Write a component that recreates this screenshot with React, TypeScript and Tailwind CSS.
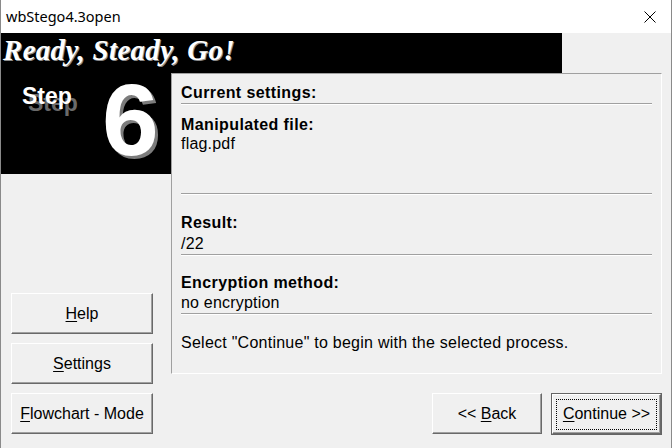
import React from "react";

const sans = "font-['Liberation_Sans',Arial,sans-serif]";

function Etched({ className = "" }: { className?: string }) {
  return <div className={`h-[2px] border-t border-b border-t-[#a0a0a0] border-b-white ${className}`} />;
}

function WinButton({
  children,
  isDefault = false,
  className = "",
}: {
  children: React.ReactNode;
  isDefault?: boolean;
  className?: string;
}) {
  if (isDefault) {
    return (
      <button className={`h-[42px] border border-[#646464] bg-[#f0f0f0] p-0 ${className}`}>
        <div className="flex h-full w-full items-center justify-center border-t border-l border-b border-r border-t-white border-l-white border-b-[#696969] border-r-[#696969] shadow-[inset_-1px_-1px_0_#a0a0a0]">
          <div className="flex h-[31px] w-[101px] items-center justify-center border border-dotted border-black">
            {children}
          </div>
        </div>
      </button>
    );
  }
  return (
    <button
      className={`flex h-[41px] items-center justify-center border-t border-l border-b border-r border-t-white border-l-white border-b-[#696969] border-r-[#696969] bg-[#f0f0f0] shadow-[inset_-1px_-1px_0_#a0a0a0] ${className}`}
    >
      {children}
    </button>
  );
}

function Label({ children }: { children: React.ReactNode }) {
  return <div className="text-[16px] font-bold leading-[18px] tracking-[0.4px] text-black">{children}</div>;
}

function Value({ children, className = "" }: { children: React.ReactNode; className?: string }) {
  return <div className={`text-[16px] leading-[18px] tracking-[0.2px] text-black ${className}`}>{children}</div>;
}

export default function App() {
  return (
    <div className={`flex h-[448px] w-[672px] flex-col overflow-hidden border-x border-[#8a8a8a] bg-[#f0f0f0] ${sans} text-black`}>
      {/* title bar */}
      <div className="flex h-[33px] shrink-0 items-center justify-between bg-white pl-[5px] pr-[15px]">
        <span className="font-['Noto_Sans',sans-serif] text-[14.5px] leading-none text-black">wbStego4.3open</span>
        <svg width="12" height="12" viewBox="0 0 12 12" className="mt-[1px]">
          <path d="M0.5 0.5 L11.5 11.5 M11.5 0.5 L0.5 11.5" stroke="#000" strokeWidth="1" fill="none" />
        </svg>
      </div>

      {/* banner */}
      <div className="h-[40px] w-[561px] shrink-0 bg-black pl-[2px] pt-[3px]">
        <span className="font-['Liberation_Serif','Times_New_Roman',serif] text-[29px] font-bold italic leading-none tracking-[0.3px] text-white [text-shadow:1px_1px_0_#8a8a8a]">
          Ready, Steady, Go!
        </span>
      </div>

      <div className="flex flex-1">
        {/* left column */}
        <div className="flex w-[170px] shrink-0 flex-col">
          <div className="relative h-[101px] bg-black">
            <span className="absolute left-[21px] top-[12px] text-[23px] font-bold leading-none text-white [text-shadow:6px_7px_0_#6a6a6a]">
              Step
            </span>
            <span className="absolute left-[101px] top-[-4px] text-[102px] font-bold leading-none text-white [text-shadow:3px_3px_0_#7c7c7c]">
              6
            </span>
          </div>
          <div className="mt-[119px] flex flex-col gap-[9px] pl-[10px]">
            <WinButton className="w-[142px]">
              <span className="text-[16px]"><span className="underline underline-offset-2">H</span>elp</span>
            </WinButton>
            <WinButton className="w-[142px]">
              <span className="text-[16px]"><span className="underline underline-offset-2">S</span>ettings</span>
            </WinButton>
            <WinButton className="w-[142px]">
              <span className="text-[16px]"><span className="underline underline-offset-2">F</span>lowchart - Mode</span>
            </WinButton>
          </div>
        </div>

        {/* right column */}
        <div className="flex flex-1 flex-col">
          <div className="flex h-[301px] w-[491px] flex-col border-t border-l border-r border-b border-t-[#a0a0a0] border-l-[#a0a0a0] border-r-white border-b-white px-[9px] pt-[10px]">
            <Label>Current settings:</Label>
            <Etched className="mt-[1px]" />
            <div className="mt-[11px]">
              <Label>Manipulated file:</Label>
            </div>
            <Value className="mt-[1px]">flag.pdf</Value>
            <Etched className="mt-[40px]" />
            <div className="mt-[19px]">
              <Label>Result:</Label>
            </div>
            <Value className="mt-[3px]">/22</Value>
            <Etched className="mt-[1px]" />
            <div className="mt-[18px]">
              <Label>Encryption method:</Label>
            </div>
            <Value className="mt-[2px]">no encryption</Value>
            <Etched className="mt-[1px]" />
            <Value className="mt-[19px] text-[16.5px] tracking-[0.25px]">Select "Continue" to begin with the selected process.</Value>
          </div>

          <div className="mt-[19px] flex justify-end gap-[9px] pr-[9px]">
            <WinButton className="w-[110px]">
              <span className="text-[16px]">&lt;&lt; <span className="underline underline-offset-2">B</span>ack</span>
            </WinButton>
            <WinButton isDefault className="w-[111px]">
              <span className="text-[16px]"><span className="underline underline-offset-2">C</span>ontinue &gt;&gt;</span>
            </WinButton>
          </div>
        </div>
      </div>
    </div>
  );
}
